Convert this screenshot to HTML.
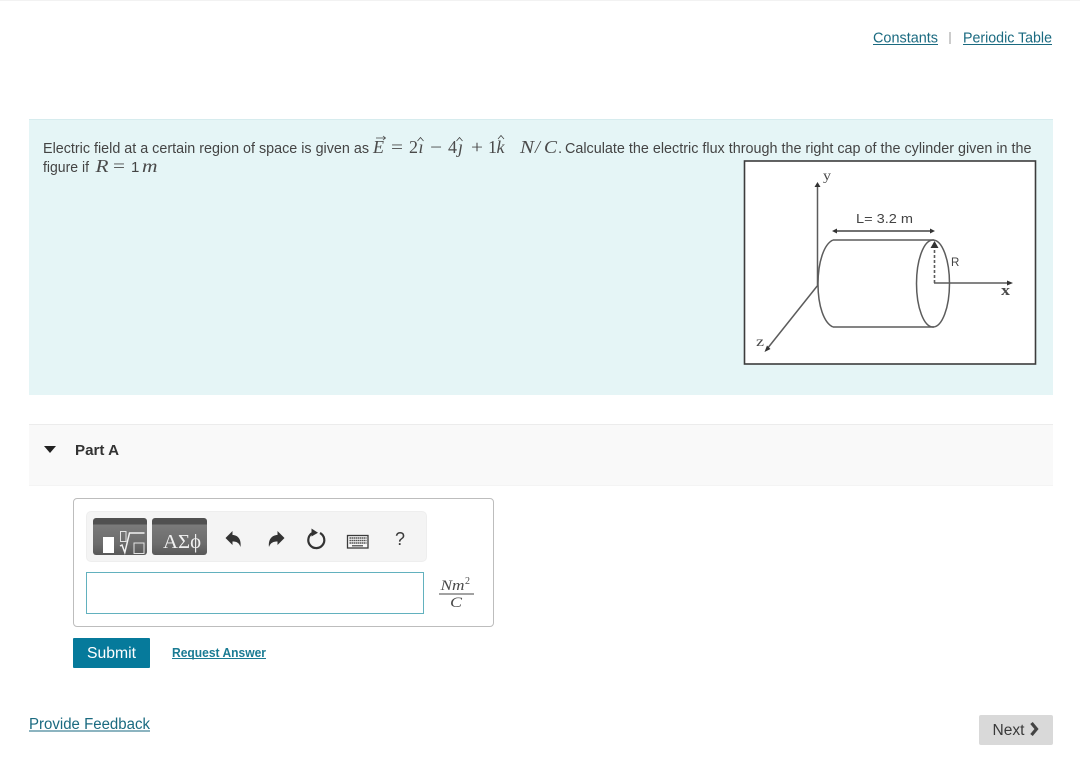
<!DOCTYPE html>
<html lang="en">
<head>
<meta charset="utf-8">
<title>Part A</title>
<style>
html,body{margin:0;padding:0;background:#fff;width:1080px;height:784px;overflow:hidden}
.b{position:absolute;box-sizing:border-box}
svg{position:absolute;left:0;top:0}
text{font-family:"Liberation Sans",sans-serif;fill:#444}
.m{font-family:"Liberation Serif",serif;font-size:18px;fill:#4a4a4a}
.i{font-style:italic}
</style>
</head>
<body>
<div class="b" style="left:0;top:0;width:1080px;height:1px;background:#f2f2f2"></div>
<div class="b" style="left:29px;top:119px;width:1024px;height:276px;background:#e5f5f6;border-top:1px solid #d6ecee"></div>
<div class="b" style="left:29px;top:424px;width:1024px;height:62px;background:#f9f9f9;border-top:1px solid #ececec;border-bottom:1px solid #f4f4f4"></div>
<div class="b" style="left:73px;top:498px;width:421px;height:129px;border:1px solid #bdbdbd;border-radius:4px;background:#fff"></div>
<div class="b" style="left:86px;top:511px;width:341px;height:51px;background:#f4f4f4;border:1px solid #eee;border-radius:5px"></div>
<div class="b" style="left:93px;top:518px;width:54px;height:37px;border-radius:3px;background:linear-gradient(#505050 0,#505050 6px,#7a7a7a 7px,#6c6c6c 70%,#585858 100%)"></div>
<div class="b" style="left:152px;top:518px;width:55px;height:37px;border-radius:3px;background:linear-gradient(#505050 0,#505050 6px,#7a7a7a 7px,#6c6c6c 70%,#585858 100%)"></div>
<div class="b" style="left:86px;top:572px;width:338px;height:42px;background:#fff;border:1.5px solid #62b1be"></div>
<div class="b" style="left:73px;top:638px;width:77px;height:30px;background:#067a9b;border-radius:1px"></div>
<div class="b" style="left:979px;top:715px;width:74px;height:30px;background:#d9d9d9;border-radius:2px"></div>

<svg width="1080" height="784" viewBox="0 0 1080 784" xmlns="http://www.w3.org/2000/svg">
  <!-- header links -->
  <text x="873" y="42.5" font-size="14.8" textLength="65" lengthAdjust="spacingAndGlyphs" style="fill:#1a6a80">Constants</text>
  <line x1="873" y1="44.5" x2="938" y2="44.5" stroke="#1a6a80" stroke-width="1"/>
  <line x1="950" y1="32" x2="950" y2="44" stroke="#999" stroke-width="1"/>
  <text x="963" y="42.5" font-size="14.8" textLength="89" lengthAdjust="spacingAndGlyphs" style="fill:#1a6a80">Periodic Table</text>
  <line x1="963" y1="44.5" x2="1052" y2="44.5" stroke="#1a6a80" stroke-width="1"/>

  <!-- statement -->
  <text x="43" y="153" font-size="15" textLength="326" lengthAdjust="spacingAndGlyphs">Electric field at a certain region of space is given as</text>
  <text x="373" y="153" class="m i">E</text>
  <path d="M376 138h9M383 136l2.500 2-2.500 2" fill="none" stroke="#444" stroke-width=".8"/>
  <text x="391" y="153" class="m" textLength="12" lengthAdjust="spacingAndGlyphs">=</text>
  <text x="409" y="153" class="m">2</text>
  <text x="418.500" y="153" class="m i">ı</text>
  <path d="M417.500 141l3-3.500 3 3.500" fill="none" stroke="#444" stroke-width=".8"/>
  <text x="430" y="153" class="m" textLength="12" lengthAdjust="spacingAndGlyphs">−</text>
  <text x="448" y="153" class="m">4</text>
  <text x="458" y="153" class="m i">ȷ</text>
  <path d="M456.500 141l3-3.500 3 3.500" fill="none" stroke="#444" stroke-width=".8"/>
  <text x="471" y="153" class="m" textLength="12" lengthAdjust="spacingAndGlyphs">+</text>
  <text x="488" y="153" class="m">1</text>
  <text x="496.500" y="153" class="m i">k</text>
  <path d="M498 139l3-3.500 3 3.500" fill="none" stroke="#444" stroke-width=".8"/>
  <text x="520" y="153" class="m i" textLength="14" lengthAdjust="spacingAndGlyphs">N</text>
  <text x="535" y="153" class="m i">/</text>
  <text x="544" y="153" class="m i" textLength="13" lengthAdjust="spacingAndGlyphs">C</text>
  <text x="558" y="153" font-size="15">.</text>
  <text x="565" y="153" font-size="15" textLength="466.500" lengthAdjust="spacingAndGlyphs">Calculate the electric flux through the right cap of the cylinder given in the</text>
  <text x="43" y="172" font-size="15" textLength="46" lengthAdjust="spacingAndGlyphs">figure if</text>
  <text x="95.500" y="172" class="m i" textLength="13" lengthAdjust="spacingAndGlyphs">R</text>
  <text x="113" y="172" class="m" textLength="12" lengthAdjust="spacingAndGlyphs">=</text>
  <text x="131" y="172" font-size="15">1</text>
  <text x="142" y="172" class="m i" textLength="15.500" lengthAdjust="spacingAndGlyphs">m</text>

  <!-- figure -->
  <rect x="744.500" y="161" width="291" height="203" fill="#fff" stroke="#3c3c3c" stroke-width="1.600"/>
  <g fill="none" stroke="#5c5c5c" stroke-width="1.500">
    <path d="M817.500 186V285"/>
    <path d="M818 285L767 349"/>
    <path d="M833 240H934M833 327H934"/>
    <path d="M833 240C824 244 818 262 818 284C818 306 824 323 833 327"/>
    <ellipse cx="933" cy="283.500" rx="16.500" ry="43.500"/>
    <path d="M934 283H1010"/>
    <path d="M934.500 283V247" stroke-dasharray="3 2" stroke-width="1.600"/>
    <path d="M834 231H932" stroke="#444"/>
  </g>
  <path d="M817.500 182l-3 5h6zM764.500 352l6-3-3.500-3.500zM1013 283l-6-2.500v5zM832 231l5-2.500v5zM935 231l-5-2.500v5zM934.500 241l-4 7h8z" fill="#333"/>
  <text x="856" y="223" font-size="13" textLength="57" lengthAdjust="spacingAndGlyphs">L= 3.2 m</text>
  <text x="951" y="266" font-size="11.500" style="fill:#444">R</text>
  <text x="1001" y="295" class="m" style="font-size:15px;font-weight:700" textLength="9" lengthAdjust="spacingAndGlyphs">x</text>
  <text x="823" y="180" class="m" style="font-size:14px" textLength="8" lengthAdjust="spacingAndGlyphs">y</text>
  <text x="756" y="346" class="m" style="font-size:14px" textLength="8" lengthAdjust="spacingAndGlyphs">z</text>

  <!-- part A -->
  <path d="M44 446H56L50 453Z" fill="#222"/>
  <text x="75" y="455" font-size="15" font-weight="700" textLength="44" lengthAdjust="spacingAndGlyphs" style="fill:#333">Part A</text>

  <!-- toolbar -->
  <rect x="103" y="537" width="11" height="16" fill="#fff"/>
  <rect x="120.500" y="531.500" width="5.500" height="10" fill="none" stroke="#e4e4e4" stroke-width="1"/>
  <path d="M120 546l2-1 2.800 7.500 4.700-19.500h15" fill="none" stroke="#f2f2f2" stroke-width="1.500"/>
  <rect x="134" y="543" width="10" height="10.500" fill="none" stroke="#e4e4e4" stroke-width="1"/>
  <text x="163" y="548" font-size="20" textLength="38" lengthAdjust="spacingAndGlyphs" style="font-family:'Liberation Serif',serif;fill:#f0f0f0">ΑΣϕ</text>

  <path d="M225.500 538L232.500 531V535C238 535 241.500 539.500 240.500 547C239 542.500 236.500 541.500 232.500 541.500V545Z" fill="#333"/>
  <path d="M284.500 538L277.500 531V535C272 535 268 539.500 269 547C270.500 542.500 273.500 541.500 277.500 541.500V545Z" fill="#333"/>
  <path d="M313 532.800A8 8 0 1 0 320 533" fill="none" stroke="#333" stroke-width="2.200"/>
  <path d="M311.500 528.500L318 532.800L311.500 536.500Z" fill="#333"/>
  <rect x="347.500" y="535.500" width="20.500" height="12.500" fill="#f8f8f8" stroke="#3a3a3a" stroke-width="1.300"/>
  <path d="M349.500 538h17M349.500 540.500h17M349.500 543h17" stroke="#444" stroke-width="1.500" stroke-dasharray="1.400 .6"/>
  <path d="M352 545.800h11" stroke="#444" stroke-width="1.200"/>
  <text x="395" y="545" font-size="18" style="fill:#3a3a3a">?</text>

  <!-- units -->
  <text x="440.500" y="590" class="m i" style="font-size:15px" textLength="24" lengthAdjust="spacingAndGlyphs">Nm</text>
  <text x="465" y="584" class="m" style="font-size:10px">2</text>
  <line x1="439" y1="594" x2="474" y2="594" stroke="#444" stroke-width="1"/>
  <text x="450" y="607" class="m i" style="font-size:15px" textLength="12" lengthAdjust="spacingAndGlyphs">C</text>

  <!-- actions -->
  <text x="87" y="658" font-size="15.500" textLength="49" lengthAdjust="spacingAndGlyphs" style="fill:#fff">Submit</text>
  <text x="172" y="657" font-size="13" font-weight="700" textLength="94" lengthAdjust="spacingAndGlyphs" style="fill:#1a7b93">Request Answer</text>
  <line x1="172" y1="658.500" x2="266" y2="658.500" stroke="#1a7b93" stroke-width="1"/>
  <text x="29" y="729" font-size="15.500" textLength="121" lengthAdjust="spacingAndGlyphs" style="fill:#1a6a80">Provide Feedback</text>
  <line x1="29" y1="731" x2="150" y2="731" stroke="#1a6a80" stroke-width="1"/>
  <text x="992.500" y="735" font-size="15.500" textLength="32" lengthAdjust="spacingAndGlyphs" style="fill:#3a3a3a">Next</text>
  <path d="M1031.500 723L1036.500 729L1031.500 735" fill="none" stroke="#444" stroke-width="3.200"/>
</svg>
</body>
</html>
